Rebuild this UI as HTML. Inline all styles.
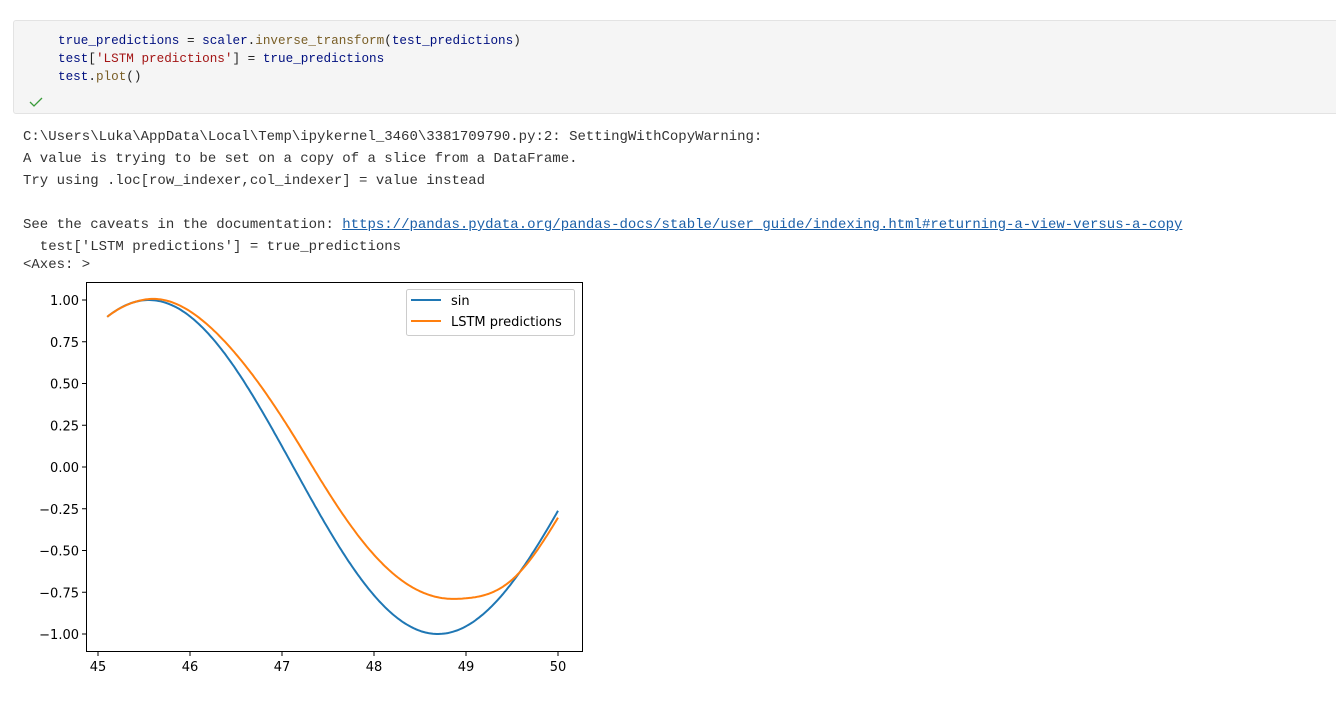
<!DOCTYPE html>
<html><head><meta charset="utf-8"><style>
body{margin:0;background:#fff;width:1336px;height:709px;overflow:hidden;position:relative;font-family:"Liberation Sans",sans-serif}
.cell{position:absolute;left:13px;top:20px;width:1330px;height:94px;background:#f5f5f5;border:1px solid #e3e3e3;border-radius:3px;box-sizing:border-box}
.code{position:absolute;left:58px;top:32px;font-family:"Liberation Mono",monospace;font-size:12.65px;line-height:18px;color:#001080;white-space:pre}
.f{color:#795e26}.s{color:#a31515}.p{color:#222}
.out{position:absolute;left:23px;top:126px;font-family:"Liberation Mono",monospace;font-size:14px;line-height:22px;color:#333;white-space:pre}
.out a{color:#1a5fa8;text-decoration:underline}
</style></head><body>
<div class="cell"></div>
<div class="code">true_predictions <span class="p">=</span> scaler<span class="p">.</span><span class="f">inverse_transform</span><span class="p">(</span>test_predictions<span class="p">)</span>
test<span class="p">[</span><span class="s">'LSTM predictions'</span><span class="p">]</span> <span class="p">=</span> true_predictions
test<span class="p">.</span><span class="f">plot</span><span class="p">()</span></div>
<svg style="position:absolute;left:29px;top:96px" width="14" height="12"><path d="M1 6 L5 10 L13 2" stroke="#3a9b3a" stroke-width="1.3" fill="none"/></svg>
<div class="out">C:\Users\Luka\AppData\Local\Temp\ipykernel_3460\3381709790.py:2: SettingWithCopyWarning:
A value is trying to be set on a copy of a slice from a DataFrame.
Try using .loc[row_indexer,col_indexer] = value instead

See the caveats in the documentation: <a>https://pandas.pydata.org/pandas-docs/stable/user_guide/indexing.html#returning-a-view-versus-a-copy</a>
  test['LSTM predictions'] = true_predictions</div>
<div class="out" style="top:256px;line-height:18px">&lt;Axes: &gt;</div>
<svg style="position:absolute;left:0;top:0" width="700" height="709" font-family="'DejaVu Sans',sans-serif" font-size="13" fill="#000">
<rect x="86.5" y="282.5" width="496" height="369" fill="none" stroke="#000" stroke-width="1"/>
<g id="yt" text-anchor="end"></g>
<g id="xt" text-anchor="middle"></g>
<path id="sinp" fill="none" stroke="#1f77b4" stroke-width="2"/>
<path id="lp" fill="none" stroke="#ff7f0e" stroke-width="2"/>
<rect x="406.5" y="289.5" width="168" height="46" rx="2" fill="#fff" fill-opacity="0.8" stroke="#ccc"/>
<line x1="411" y1="300" x2="441" y2="300" stroke="#1f77b4" stroke-width="2"/>
<line x1="411" y1="321" x2="441" y2="321" stroke="#ff7f0e" stroke-width="2"/>
<text x="451" y="305">sin</text>
<text x="451" y="326">LSTM predictions</text>
</svg>
<script>
var X=function(x){return 98+(x-45)*92},Y=function(v){return 467-167*v};
var yt=document.getElementById('yt'),xt=document.getElementById('xt'),ns='http://www.w3.org/2000/svg';
[1,0.75,0.5,0.25,0,-0.25,-0.5,-0.75,-1].forEach(function(v){var y=Y(v);
var l=document.createElementNS(ns,'line');l.setAttribute('x1',82);l.setAttribute('x2',86);l.setAttribute('y1',y);l.setAttribute('y2',y);l.setAttribute('stroke','#000');yt.appendChild(l);
var t=document.createElementNS(ns,'text');t.setAttribute('x',79);t.setAttribute('y',y+5);t.textContent=(v<0?'\u2212':'')+Math.abs(v).toFixed(2);yt.appendChild(t);});
[45,46,47,48,49,50].forEach(function(v){var x=X(v);
var l=document.createElementNS(ns,'line');l.setAttribute('x1',x);l.setAttribute('x2',x);l.setAttribute('y1',652);l.setAttribute('y2',656);l.setAttribute('stroke','#000');xt.appendChild(l);
var t=document.createElementNS(ns,'text');t.setAttribute('x',x);t.setAttribute('y',671);t.textContent=v;xt.appendChild(t);});
function lerp(pts,x){for(var i=0;i<pts.length-1;i++){if(x<=pts[i+1][0]){var a=pts[i],b=pts[i+1],t=(x-a[0])/(b[0]-a[0]);t=Math.max(0,Math.min(1,t));t=(1-Math.cos(Math.PI*t))/2;return a[1]+(b[1]-a[1])*t;}}return pts[pts.length-1][1];}
var S=[[45.1,0],[45.6,0.03],[47.3,0.21],[48.87,0.175],[50,0.06]];
var A=[[45.1,1],[45.9,1.01],[48.9,0.79],[50,0.95]];
var d1='',d2='';
for(var x=45.1;x<=50.0001;x+=0.02){var s=Math.sin(x);var o=lerp(A,x)*Math.sin(x-lerp(S,x));
d1+=(d1?'L':'M')+X(x).toFixed(1)+' '+Y(s).toFixed(1);d2+=(d2?'L':'M')+X(x).toFixed(1)+' '+Y(o).toFixed(1);}
document.getElementById('sinp').setAttribute('d',d1);document.getElementById('lp').setAttribute('d',d2);
</script>
</body></html>
